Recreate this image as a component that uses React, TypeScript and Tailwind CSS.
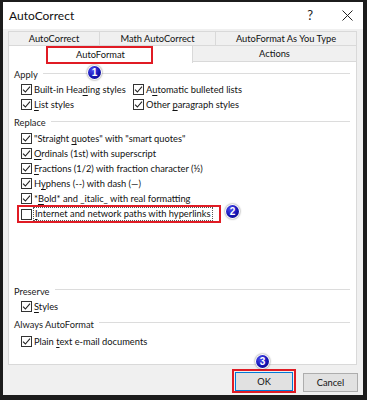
import React from "react";

const Check = ({ checked = true }: { checked?: boolean }) => (
  <span className="w-[11px] h-[11px] border border-[#333] bg-white flex items-center justify-center shrink-0">
    {checked && (
      <svg width="9" height="9" viewBox="0 0 9 9">
        <path d="M1 4.6 L3.4 7 L8 1.6" fill="none" stroke="#222" strokeWidth="1.1" />
      </svg>
    )}
  </span>
);

const U = ({ children }: { children: React.ReactNode }) => <span className="underline underline-offset-[2px]">{children}</span>;

const Row = ({ children, checked = true, className = "" }: { children: React.ReactNode; checked?: boolean; className?: string }) => (
  <div className={`h-[15px] flex items-center gap-[2px] ${className}`}>
    <Check checked={checked} />
    <span className="whitespace-nowrap leading-none">{children}</span>
  </div>
);

const Group = ({ label, className = "" }: { label: string; className?: string }) => (
  <div className={`h-[14px] flex items-center gap-[5px] pr-[6px] ${className}`}>
    <span className="text-[#222] leading-none whitespace-nowrap">{label}</span>
    <div className="flex-1 h-px bg-[#dcdcdc] -mt-[3px]" />
  </div>
);

const Badge = ({ n, className }: { n: string; className: string }) => (
  <div className={`absolute w-[15px] h-[15px] rounded-full bg-white shadow-[0_0_2px_rgba(0,0,0,0.6)] flex items-center justify-center ${className}`}>
    <div className="w-[13px] h-[13px] rounded-full bg-[radial-gradient(circle_at_35%_30%,#4a4af0,#1414b4_55%,#0a0a78)] flex items-center justify-center text-white text-[10px] font-bold leading-none font-['Liberation_Sans',sans-serif]">
      {n}
    </div>
  </div>
);

export default function App() {
  return (
    <div className="w-[367px] h-[400px] bg-[#1c1c1c] pt-[2px] pl-[3px] pr-[4px] pb-[5px] font-['Lato',sans-serif] text-[9.3px] text-[#111]">
      <div className="relative w-full h-full bg-[#f0f0f0] flex flex-col">
        {/* title bar */}
        <div className="h-[27px] bg-white flex items-center pl-[6px] shrink-0">
          <span className="text-[12px] text-[#111]">AutoCorrect</span>
          <div className="flex-1" />
          <span className="text-[13px] text-[#222] mr-[29px]">?</span>
          <svg width="11" height="11" viewBox="0 0 11 11" className="mr-[10px]">
            <path d="M0.5 0.5 L10.5 10.5 M10.5 0.5 L0.5 10.5" stroke="#222" strokeWidth="1" />
          </svg>
        </div>
        <div className="pl-[5px] pr-[6px] pt-[2px] flex flex-col">
          {/* tabs row 1 */}
          <div className="flex h-[14px]">
            <div className="w-[92px] border border-b-0 border-[#d9d9d9] bg-[#f0f0f0] flex items-center justify-center leading-none pt-[1px]">AutoCorrect</div>
            <div className="w-[116px] border border-b-0 border-l-0 border-[#d9d9d9] bg-[#f0f0f0] flex items-center justify-center leading-none pt-[1px]">Math AutoCorrect</div>
            <div className="flex-1 border border-b-0 border-l-0 border-[#d9d9d9] bg-[#f0f0f0] flex items-center justify-center leading-none pt-[1px]">AutoFormat As You Type</div>
          </div>
          {/* tabs row 2 */}
          <div className="flex h-[17px] relative z-10">
            <div className="relative w-[185px] border border-b-0 border-[#d9d9d9] bg-white flex items-center justify-center leading-none h-[18px]">
              AutoFormat
              <div className="absolute left-[37px] top-0 w-[107px] h-[18px] border-2 border-[#e01b24]" />
            </div>
            <div className="flex-1 border border-l-0 border-[#d9d9d9] bg-[#f0f0f0] flex items-center justify-center leading-none">Actions</div>
          </div>
          {/* panel */}
          <div className="h-[304px] bg-white border border-[#d9d9d9] -mt-px pl-[5px] pt-[6px] flex flex-col">
            <Group label="Apply" />
            <div className="pl-[7px] grid grid-cols-[112px_1fr]">
              <Row>Built-in Hea<U>d</U>ing styles</Row>
              <Row>A<U>u</U>tomatic bulleted lists</Row>
              <Row><U>L</U>ist styles</Row>
              <Row>Other <U>p</U>aragraph styles</Row>
            </div>
            <Group label="Replace" className="mt-[4px]" />
            <div className="pl-[7px] flex flex-col mt-[1px]">
              <Row>"Straight <U>q</U>uotes" with "smart quotes"</Row>
              <Row><U>O</U>rdinals (1st) with superscript</Row>
              <Row><U>F</U>ractions (1/2) with fraction character (½)</Row>
              <Row>H<U>y</U>phens (--) with dash (—)</Row>
              <Row>*<U>B</U>old* and _italic_ with real formatting</Row>
            </div>
            <div className="pl-[3px] -mt-[1px]">
              <div className="inline-flex h-[18px] items-center gap-[1px] border-2 border-[#e01b24] pl-[2px] pr-[6px]">
                <Check checked={false} />
                <span className="whitespace-nowrap leading-none border border-dotted border-[#555] px-[1px] py-[1px]"><U>I</U>nternet and network paths with hyperlinks</span>
              </div>
            </div>
            <Group label="Preserve" className="mt-[61px]" />
            <div className="pl-[7px] flex flex-col mt-[1px]">
              <Row><U>S</U>tyles</Row>
            </div>
            <Group label="Always AutoFormat" className="mt-[3px]" />
            <div className="pl-[7px] flex flex-col mt-[3px]">
              <Row>Plain <U>t</U>ext e-mail documents</Row>
            </div>
          </div>
        </div>
        {/* buttons */}
        <div className="flex justify-end items-start pr-[5px] mt-[4px] gap-[7px]">
          <div className="border-2 border-[#e01b24] pt-[1px] px-[1px]">
            <div className="w-[58px] h-[19px] bg-[#e1e1e1] border border-[#0078d7] flex items-center justify-center leading-none">OK</div>
          </div>
          <div className="w-[55px] h-[19px] mt-[4px] bg-[#e1e1e1] border border-[#adadad] flex items-center justify-center leading-none">Cancel</div>
        </div>
        <Badge n="1" className="left-[84px] top-[63px]" />
        <Badge n="2" className="left-[222px] top-[202px]" />
        <Badge n="3" className="left-[252px] top-[352px]" />
      </div>
    </div>
  );
}
